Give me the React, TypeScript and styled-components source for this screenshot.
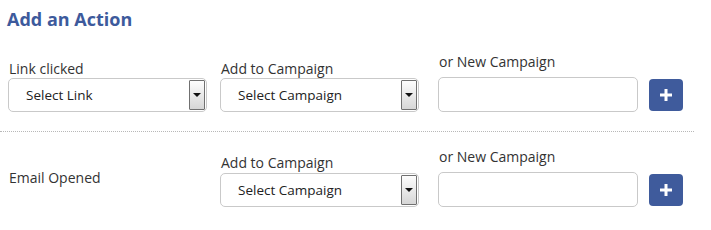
import React from 'react';
import styled, { createGlobalStyle } from 'styled-components';

const GlobalStyle = createGlobalStyle`
  body {
    margin: 0;
    background: #fff;
    font-family: 'Open Sans', 'Liberation Sans', sans-serif;
    color: #333;
  }
`;

const Page = styled.div`
  padding: 5px 8px 0 8px;
`;

const Title = styled.h3`
  margin: 0 0 0 -1px;
  font-size: 18px;
  line-height: 28px;
  font-weight: 700;
  color: #3d5a9c;
`;

const ActionRow = styled.div<{ $top: number }>`
  display: grid;
  grid-template-columns: 212px 218px 211px auto;
  align-items: end;
  margin-top: ${(p) => p.$top}px;
`;

const Field = styled.div<{ $center?: boolean }>`
  display: flex;
  flex-direction: column;
  align-self: ${(p) => (p.$center ? 'center' : 'end')};
`;

const Label = styled.label<{ $gap: number }>`
  display: block;
  font-size: 14px;
  line-height: 19px;
  margin-bottom: ${(p) => p.$gap}px;
  padding-left: 1px;
`;

const SelectBox = styled.div`
  position: relative;
  box-sizing: border-box;
  width: 199px;
  height: 34px;
  border: 1px solid #c9c9c9;
  border-radius: 5px;
  display: flex;
  align-items: center;
  padding-left: 17px;
  font-size: 13.5px;
  color: #222;
`;

const ArrowButton = styled.span`
  position: absolute;
  top: 1px;
  right: 1px;
  bottom: 1px;
  width: 14px;
  border: 1px solid #707070;
  border-radius: 1px;
  background: linear-gradient(#fdfdfd, #d6d6d6);
  display: flex;
  align-items: center;
  justify-content: center;

  &::after {
    content: '';
    border-left: 4px solid transparent;
    border-right: 4px solid transparent;
    border-top: 4px solid #111;
  }
`;

const TextInput = styled.input`
  box-sizing: border-box;
  width: 200px;
  height: 35px;
  border: 1px solid #c9c9c9;
  border-radius: 5px;
  margin: 0;
  padding: 0 10px;
  font: inherit;
  font-size: 14px;
  outline: none;
`;

const AddButton = styled.button<{ $bottom: number }>`
  width: 34px;
  height: 32px;
  margin-bottom: ${(p) => p.$bottom}px;
  border: none;
  border-radius: 4px;
  background: #3f5b9c;
  display: flex;
  align-items: center;
  justify-content: center;
  padding: 0;
  cursor: pointer;
`;

const Divider = styled.hr`
  margin: 19px 0 0 -8px;
  width: 694px;
  border: none;
  border-top: 1px dotted #b8b8b8;
  height: 0;
`;

const PlusIcon = () => (
  <svg width="12" height="12" viewBox="0 0 12 12">
    <path d="M4.5 0h3v4.5H12v3H7.5V12h-3V7.5H0v-3h4.5z" fill="#fff" />
  </svg>
);

const Select = ({ text }: { text: string }) => (
  <SelectBox>
    {text}
    <ArrowButton />
  </SelectBox>
);

const App = () => (
  <>
    <GlobalStyle />
    <Page>
      <Title>Add an Action</Title>
      <ActionRow $top={19}>
        <Field>
          <Label $gap={0}>Link clicked</Label>
          <Select text="Select Link" />
        </Field>
        <Field>
          <Label $gap={0}>Add to Campaign</Label>
          <Select text="Select Campaign" />
        </Field>
        <Field>
          <Label $gap={6}>or New Campaign</Label>
          <TextInput type="text" />
        </Field>
        <AddButton $bottom={1}>
          <PlusIcon />
        </AddButton>
      </ActionRow>
      <Divider />
      <ActionRow $top={15}>
        <Field $center>
          <Label $gap={0}>Email Opened</Label>
        </Field>
        <Field>
          <Label $gap={1}>Add to Campaign</Label>
          <Select text="Select Campaign" />
        </Field>
        <Field>
          <Label $gap={6}>or New Campaign</Label>
          <TextInput type="text" />
        </Field>
        <AddButton $bottom={1}>
          <PlusIcon />
        </AddButton>
      </ActionRow>
    </Page>
  </>
);

export default App;
